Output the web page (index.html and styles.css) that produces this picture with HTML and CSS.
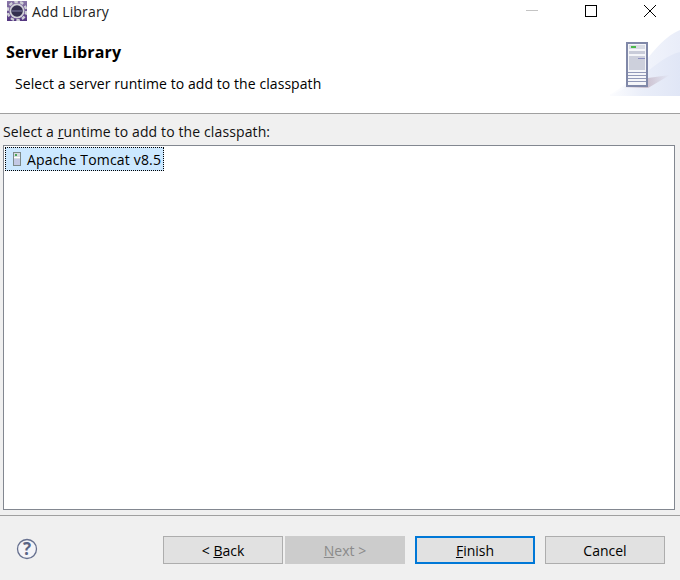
FILE: index.html
```html
<!DOCTYPE html>
<html lang="en">
<head>
<meta charset="utf-8">
<title>Add Library</title>
<link rel="stylesheet" href="styles.css">
</head>
<body>
<div class="dialog">
  <div class="titlebar">
    <svg class="app-icon" width="20" height="20" viewBox="0 0 20 20">
      <defs>
        <linearGradient id="iconbg" x1="0" y1="0" x2="0" y2="1">
          <stop offset="0" stop-color="#8a78a8"/>
          <stop offset="1" stop-color="#52357f"/>
        </linearGradient>
      </defs>
      <rect width="20" height="20" fill="url(#iconbg)"/>
      <circle cx="10" cy="10" r="9.300" fill="none" stroke="#cfd0d6" stroke-width="2.400" stroke-dasharray="3.500 2.340"/>
      <circle cx="10" cy="10" r="7.500" fill="#d2d2d8"/>
      <circle cx="10" cy="10" r="5.800" fill="#34304f"/>
      <path d="M4.500 10h11" stroke="#77749a" stroke-width="1.200"/>
    </svg>
    <span class="title">Add Library</span>
    <div class="win-controls">
      <svg class="win-btn" width="46" height="24" viewBox="0 0 46 24"><path d="M17 10.500h12" stroke="#c4c4c4"/></svg>
      <svg class="win-btn" width="46" height="24" viewBox="0 0 46 24"><rect x="17.500" y="5.500" width="11" height="11" fill="none" stroke="#000"/></svg>
      <svg class="win-btn" width="46" height="24" viewBox="0 0 46 24"><path d="M17 5l12 12M29 5l-12 12" stroke="#000" fill="none"/></svg>
    </div>
  </div>
  <header class="banner">
    <div class="banner-text">
      <h1 class="banner-title">Server Library</h1>
      <p class="banner-desc">Select a server runtime to add to the classpath</p>
    </div>
    <svg class="banner-art" width="70" height="66" viewBox="0 0 70 66">
      <defs>
        <linearGradient id="sweep" x1="0" y1="0" x2="1" y2="0">
          <stop offset="0" stop-color="#ffffff"/>
          <stop offset="0.6" stop-color="#f0f3fb"/>
          <stop offset="1" stop-color="#e9edf9"/>
        </linearGradient>
        <linearGradient id="sweep2" x1="0" y1="0" x2="1" y2="0">
          <stop offset="0" stop-color="#ffffff"/>
          <stop offset="0.5" stop-color="#eaeef9"/>
          <stop offset="1" stop-color="#e0e6f6"/>
        </linearGradient>
        <linearGradient id="shadow" x1="0" y1="0" x2="1" y2="0">
          <stop offset="0" stop-color="#c0b0c0" stop-opacity="0"/>
          <stop offset="0.5" stop-color="#c0b0c0" stop-opacity=".75"/>
          <stop offset="1" stop-color="#c0b0c0" stop-opacity="0"/>
        </linearGradient>
      </defs>
      <path d="M-6 66C24 60 40 12 70 0V66Z" fill="url(#sweep)"/>
      <path d="M-6 66C24 62 44 28 70 22V66Z" fill="url(#sweep2)"/>
      <path d="M12 58L38 58L60 45L38 48Z" fill="url(#shadow)"/>
      <rect x="16" y="12" width="22" height="45" fill="#8088a8"/>
      <rect x="18" y="14" width="18" height="41" fill="#f5f6f9"/>
      <rect x="19" y="15" width="16" height="4" fill="#d8dbe4"/>
      <rect x="21" y="16" width="5" height="2" fill="#4cb84c"/>
      <rect x="19" y="21" width="16" height="3" fill="#c9ccd9"/>
      <rect x="19" y="26" width="16" height="14" fill="#cdd0dc"/>
      <rect x="28" y="28" width="7" height="1" fill="#8c8fc0"/>
      <path d="M18 42.500h18M18 45.500h18M18 48.500h18M18 51.500h18" stroke="#9299b8"/>
    </svg>
  </header>
  <main class="content">
    <div class="list-label">Select a <u>r</u>untime to add to the classpath:</div>
    <div class="list">
      <div class="list-item">
        <svg class="item-icon" width="8" height="14" viewBox="0 0 8 14">
          <rect x="0.500" y="0.500" width="7" height="13" fill="#d8dce0" stroke="#7d8a8a"/>
          <rect x="2" y="2" width="2" height="2" fill="#4aa858"/>
          <rect x="1" y="5" width="6" height="1" fill="#fff"/>
          <rect x="1" y="7" width="6" height="6" fill="#c3c8e4"/>
        </svg>
        <span class="item-label">Apache Tomcat v8.5</span>
      </div>
    </div>
  </main>
  <footer class="footer">
    <svg class="help" width="22" height="22" viewBox="0 0 22 22">
      <circle cx="11" cy="11" r="9.500" fill="#f4f4f8" stroke="#66708f" stroke-width="1.300"/>
      <text x="11" y="17" text-anchor="middle" class="help-mark">?</text>
    </svg>
    <div class="buttons">
      <div class="nav-buttons">
        <button class="btn">&lt; <u>B</u>ack</button>
        <button class="btn btn-disabled" disabled><u>N</u>ext &gt;</button>
      </div>
      <button class="btn btn-default"><u>F</u>inish</button>
      <button class="btn">Cancel</button>
    </div>
  </footer>
</div>
</body>
</html>
```

FILE: styles.css
```css
* { box-sizing: border-box; }
html, body { margin: 0; padding: 0; }
body {
  width: 680px;
  height: 580px;
  overflow: hidden;
  font-family: "Open Sans", "Noto Sans", sans-serif;
  font-size: 14px;
  letter-spacing: .07px;
  color: #000;
  background: #f0f0f0;
}
.dialog { display: flex; flex-direction: column; height: 580px; }
.titlebar {
  display: flex;
  align-items: center;
  height: 24px;
  padding-left: 7px;
  background: #fff;
}
.app-icon { margin: 0 5px 2px 0; flex: none; }
.title { color: #222; line-height: 24px; letter-spacing: .15px; }
.win-controls { display: flex; margin-left: auto; margin-right: 7px; gap: 13px; }
.win-btn { display: block; }
.banner {
  display: flex;
  justify-content: space-between;
  height: 90px;
  background: #fff;
  border-bottom: 1px solid #a0a0a0;
}
.banner-text { padding: 18px 0 0 6px; }
.banner-title { margin: 0; font-size: 16px; line-height: 20px; font-weight: 700; letter-spacing: .17px; }
.banner-desc { margin: 12px 0 0 9px; line-height: 20px; }
.banner-art { flex: none; margin-top: 6px; }
.content { display: flex; flex-direction: column; padding: 8px 5px 5px 3px; }
.list-label { line-height: 20px; height: 23px; color: #111; letter-spacing: .12px; }
.list {
  height: 365px;
  padding: 1px;
  background: #fff;
  border: 1px solid #828790;
}
.list-item {
  display: inline-flex;
  align-items: center;
  gap: 6px;
  height: 24px;
  padding: 0 3px 0 8px;
  background: #cce8ff;
  outline: 1px dotted #000;
  outline-offset: -1px;
}
.item-label { letter-spacing: .18px; }
.item-icon { flex: none; }
.footer {
  display: flex;
  align-items: center;
  justify-content: space-between;
  flex: 1;
  padding: 4px 15px 0 16px;
  border-top: 1px solid #a0a0a0;
}
.help { display: block; margin-bottom: 2px; }
.help-mark { font-size: 17px; font-weight: 700; fill: #5a6585; font-family: "Open Sans", sans-serif; }
.buttons { display: flex; gap: 10px; }
.nav-buttons { display: flex; gap: 2px; }
.btn {
  width: 120px;
  height: 28px;
  padding: 0;
  font: inherit;
  color: #000;
  background: #e1e1e1;
  border: 1px solid #adadad;
}
.btn-disabled { color: #8a8a8a; background: #cccccc; border-color: #cccccc; }
.btn-default { border: 2px solid #0078d7; }
```
